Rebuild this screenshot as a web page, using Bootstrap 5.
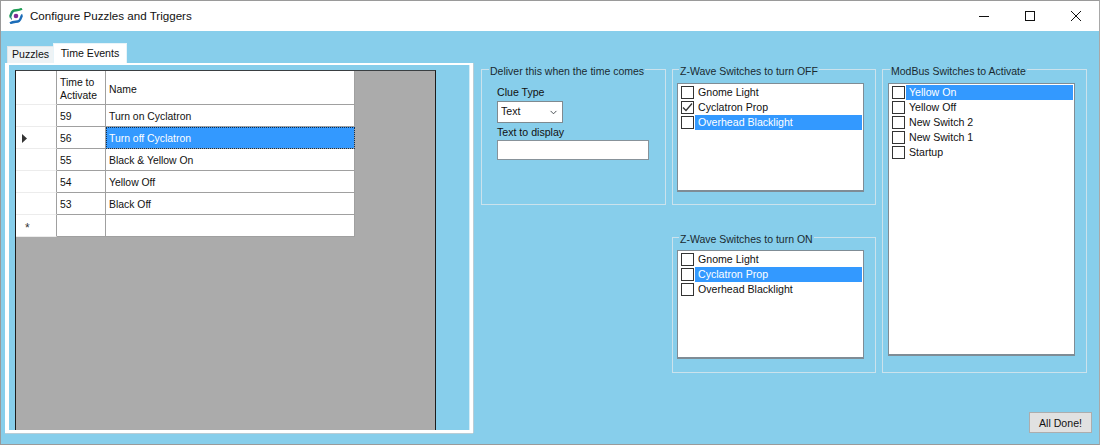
<!DOCTYPE html>
<html lang="en">
<head>
<meta charset="utf-8">
<title>Configure Puzzles and Triggers</title>
<link href="https://cdn.jsdelivr.net/npm/bootstrap@5.3.0/dist/css/bootstrap.min.css" rel="stylesheet">
<style>
html,body{height:445px;overflow:hidden;background:#87ceeb}
body{font-family:"Liberation Sans",Arial,sans-serif;font-size:10.6px;line-height:13px;color:#111}
.win-shell{height:445px;border:1px solid #9a9a9a;border-right-color:#a8a8a8;background:#87ceeb}
.win-title{height:30px;background:#fff;font-size:11.6px;padding-left:7px;gap:6px}
.win-caption{padding-bottom:2px}
.win-btn{width:46px;height:30px}
.win-body{height:413px;position:relative}
.pane-left{width:472px;padding:12px 0 0 4px;flex:none}
.tab-strip{border:0;height:20px;align-items:flex-end;padding-left:2px;flex-wrap:nowrap}
.tab-strip .nav-link{font-size:10.6px;line-height:13px;color:#111;border-radius:0;margin:0;border:1px solid #dfe6ea;border-bottom:0;background:#eef3f5;padding:1px 4px 1px;height:17px;width:47px;text-align:center}
.tab-strip .nav-link.active{background:#fff;color:#111;height:20px;width:74px;border-color:#e8f4f9;padding-top:3px;margin-left:-1px}
.tab-frame{width:468px;height:370px;border-style:solid;border-color:#fff;border-width:2px 3px 3px 4px;padding:5px 0 0 6px;box-shadow:1px 0 0 #b9cdd6,0 1px 0 #b9cdd6,inset -1px 0 0 #d4ecf6}
.grid-view{width:421px;height:360px;background:#ababab;border:1px solid #1c1c1c;border-bottom:0;border-top-color:#3a3f42}
.grid-table{width:339px;table-layout:fixed;margin:0;border-collapse:separate;border-spacing:0;color:#111;--bs-table-bg:transparent;background:#fff}
.grid-table td,.grid-table th{padding:2px 3px 0;height:22px;font-weight:400;border:0;border-right:1px solid #a0a0a0;border-bottom:1px solid #a0a0a0;vertical-align:middle;font-size:10.4px;line-height:13px;background:#fff;color:#111;box-shadow:none}
.grid-table thead th{height:34px;padding:3px 3px 0}
.grid-table .row-head{border-bottom-color:#ececec;padding:2px 0 0;text-align:left}
.grid-table .cell-sel{background:#3399ff;color:#fff;outline:1px dotted #0b2f55;outline-offset:-1px}
.row-arrow{display:block;margin-left:6px}
.row-star{display:block;margin-left:9px;padding-top:3px;font-size:12px;line-height:12px;color:#333}
.pane-right{padding:30px 0 0 8px;display:grid;grid-template-columns:185px 204px 205px;grid-template-rows:144px 144px;column-gap:6px;row-gap:24px;align-content:start}
.grp{border:1px solid #cbe2ec;margin:0;padding:0 11px 0 4px;min-width:0;height:144px}
.grp-tall{grid-column:3;grid-row:1 / span 2;height:312px;padding-left:5px}
.grp-off{grid-column:2;grid-row:1}
.grp-on{grid-column:2;grid-row:2}
.grp-a{grid-column:1;grid-row:1;padding-left:15px}
.grp legend{float:none;width:auto;font-size:10.5px;line-height:13px;margin:0 0 0 2px;padding:4px 1px 0;color:#1a2a30}
.grp-a legend{margin-left:-8px}
.fld-label{display:block;margin:0;line-height:13px}
.lbl-clue{margin-top:8px}
.lbl-disp{margin-top:3px}
.fld-select{width:66px;height:22px;padding:0 0 0 3px;font-size:10.6px;border:1px solid #7f8a90;border-radius:0;color:#111;background-position:right 4px center;background-size:9px 7px;margin:2px 0 0 0}
.fld-text{width:152px;height:20px;border:1px solid #87929a;border-radius:0;padding:0 3px;font-size:10.6px;margin-top:1px}
.chk-list{background:#fff;border:1px solid #7f8c95;border-radius:0;border-bottom-width:2px;height:109px;padding:1px;flex-wrap:nowrap;margin-top:5px}
.grp-on .chk-list{margin-top:4px}
.grp-tall .chk-list{height:273px;margin-top:5px}
.chk-row{border:0;border-radius:0;padding:0;background:transparent;color:#111;height:15px;align-items:flex-start;gap:1px;flex-direction:row;display:flex}
.chk-row .form-check-input{width:13px;height:13px;margin:1px 0 0 2px;border:1px solid #333;border-radius:0;flex:none;float:none}
.chk-row .form-check-input:checked{background-color:#fff;border-color:#333;background-image:url("data:image/svg+xml,%3csvg xmlns='http://www.w3.org/2000/svg' viewBox='0 0 13 13'%3e%3cpath fill='none' stroke='%23333' stroke-width='1.3' d='M2 6.500l3 3 6-7'/%3e%3c/svg%3e");background-size:13px 13px}
.chk-txt{flex:1;height:15px;line-height:14px;padding-left:3px}
.chk-txt.on{background:#3399ff;color:#fff}
.done-btn{position:absolute;left:1028px;top:381px;width:63px;height:21px;padding:0;font-size:10.6px;line-height:18px;background:#e1e1e1;border:1px solid #adadad;border-radius:0;color:#111}
</style>
</head>
<body>
<div class="win-shell d-flex flex-column">
  <div class="win-title d-flex align-items-center">
    <svg width="16" height="16" viewBox="0 0 16 16" aria-hidden="true">
      <path d="M1.500 9C3 8.500 2.800 4.500 5 3 7 1.700 10 2.800 14 .8" stroke="#1f9e55" stroke-width="2.400" fill="none"/>
      <path d="M14.500 7C13 7.500 13.200 11.500 11 13 9 14.300 6 13.200 2 15.200" stroke="#1c6db8" stroke-width="2.400" fill="none"/>
      <path d="M3.600 11.500A5.500 5.500 0 0 1 6 3.300" stroke="#1f7a80" stroke-width="1.200" fill="none"/>
      <circle cx="8" cy="8" r="2.300" fill="#7d2a96"/>
    </svg>
    <span class="flex-grow-1 win-caption">Configure Puzzles and Triggers</span>
    <div class="d-flex">
      <div class="win-btn d-flex align-items-center justify-content-center"><svg width="10" height="10" viewBox="0 0 10 10"><path d="M0 5.500h10" stroke="#111" fill="none"/></svg></div>
      <div class="win-btn d-flex align-items-center justify-content-center"><svg width="10" height="10" viewBox="0 0 10 10"><rect x=".5" y=".5" width="9" height="9" stroke="#111" fill="none"/></svg></div>
      <div class="win-btn d-flex align-items-center justify-content-center"><svg width="10" height="10" viewBox="0 0 10 10"><path d="M0 0l10 10M10 0L0 10" stroke="#111" fill="none"/></svg></div>
    </div>
  </div>
  <div class="win-body d-flex">
    <div class="pane-left">
      <ul class="nav nav-tabs tab-strip">
        <li class="nav-item"><a class="nav-link" href="#">Puzzles</a></li>
        <li class="nav-item"><a class="nav-link active" href="#">Time Events</a></li>
      </ul>
      <div class="tab-frame">
        <div class="grid-view">
          <table class="table grid-table">
            <colgroup><col style="width:41px"><col style="width:49px"><col style="width:249px"></colgroup>
            <thead>
              <tr><th class="row-head"></th><th>Time to Activate</th><th>Name</th></tr>
            </thead>
            <tbody>
              <tr><td class="row-head"></td><td>59</td><td>Turn on Cyclatron</td></tr>
              <tr><td class="row-head"><svg class="row-arrow" width="5" height="9" viewBox="0 0 5 9"><path d="M0 0l5 4.500L0 9z" fill="#333"/></svg></td><td>56</td><td class="cell-sel">Turn off Cyclatron</td></tr>
              <tr><td class="row-head"></td><td>55</td><td>Black &amp; Yellow On</td></tr>
              <tr><td class="row-head"></td><td>54</td><td>Yellow Off</td></tr>
              <tr><td class="row-head"></td><td>53</td><td>Black Off</td></tr>
              <tr><td class="row-head"><span class="row-star">*</span></td><td></td><td></td></tr>
            </tbody>
          </table>
        </div>
      </div>
    </div>
    <div class="pane-right">
      <fieldset class="grp grp-a">
        <legend>Deliver this when the time comes</legend>
        <label class="fld-label lbl-clue">Clue Type</label>
        <select class="form-select fld-select"><option>Text</option></select>
        <label class="fld-label lbl-disp">Text to display</label>
        <input class="form-control fld-text" type="text">
      </fieldset>
      <fieldset class="grp grp-off">
        <legend>Z-Wave Switches to turn OFF</legend>
        <div class="list-group chk-list">
          <div class="list-group-item chk-row"><input class="form-check-input" type="checkbox"><span class="chk-txt">Gnome Light</span></div>
          <div class="list-group-item chk-row"><input class="form-check-input" type="checkbox" checked><span class="chk-txt">Cyclatron Prop</span></div>
          <div class="list-group-item chk-row"><input class="form-check-input" type="checkbox"><span class="chk-txt on">Overhead Blacklight</span></div>
        </div>
      </fieldset>
      <fieldset class="grp grp-tall">
        <legend>ModBus Switches to Activate</legend>
        <div class="list-group chk-list">
          <div class="list-group-item chk-row"><input class="form-check-input" type="checkbox"><span class="chk-txt on">Yellow On</span></div>
          <div class="list-group-item chk-row"><input class="form-check-input" type="checkbox"><span class="chk-txt">Yellow Off</span></div>
          <div class="list-group-item chk-row"><input class="form-check-input" type="checkbox"><span class="chk-txt">New Switch 2</span></div>
          <div class="list-group-item chk-row"><input class="form-check-input" type="checkbox"><span class="chk-txt">New Switch 1</span></div>
          <div class="list-group-item chk-row"><input class="form-check-input" type="checkbox"><span class="chk-txt">Startup</span></div>
        </div>
      </fieldset>
      <fieldset class="grp grp-on">
        <legend>Z-Wave Switches to turn ON</legend>
        <div class="list-group chk-list">
          <div class="list-group-item chk-row"><input class="form-check-input" type="checkbox"><span class="chk-txt">Gnome Light</span></div>
          <div class="list-group-item chk-row"><input class="form-check-input" type="checkbox"><span class="chk-txt on">Cyclatron Prop</span></div>
          <div class="list-group-item chk-row"><input class="form-check-input" type="checkbox"><span class="chk-txt">Overhead Blacklight</span></div>
        </div>
      </fieldset>
    </div>
    <button class="btn done-btn" type="button">All Done!</button>
  </div>
</div>
<script src="https://cdn.jsdelivr.net/npm/bootstrap@5.3.0/dist/js/bootstrap.bundle.min.js"></script>
</body>
</html>
